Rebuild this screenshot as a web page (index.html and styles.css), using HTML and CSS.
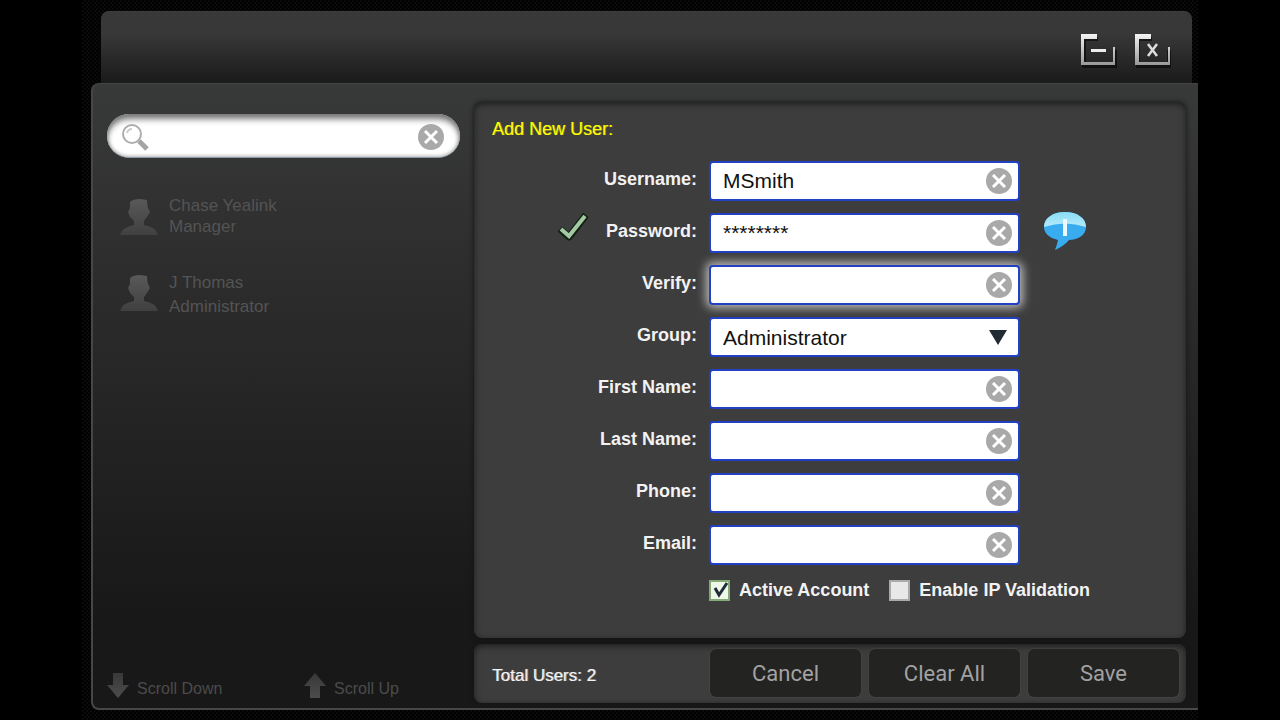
FILE: index.html
```html
<!DOCTYPE html>
<html lang="en">
<head>
<meta charset="utf-8">
<title>User Management</title>
<link rel="stylesheet" href="styles.css">
</head>
<body>
<svg class="defs" aria-hidden="true">
  <defs>
    <linearGradient id="steel" x1="0" y1="0" x2="0" y2="1"><stop offset="0" stop-color="#f4f4f4"/><stop offset="1" stop-color="#989898"/></linearGradient>
    <linearGradient id="person-fill" x1="0" y1="0" x2="0" y2="1"><stop offset="0" stop-color="#595959"/><stop offset="1" stop-color="#404040"/></linearGradient>
    <linearGradient id="arrow-fill" x1="0" y1="0" x2="0" y2="1"><stop offset="0" stop-color="#383838"/><stop offset="1" stop-color="#4c4c4c"/></linearGradient>
    <linearGradient id="bubble-top" x1="0" y1="0" x2="0" y2="1"><stop offset="0" stop-color="#8adcf4"/><stop offset="1" stop-color="#b4ebfa"/></linearGradient>
  </defs>
  <symbol id="clear" viewBox="0 0 26 26">
    <circle cx="13" cy="13" r="13" fill="#a9a9a9"/>
    <path d="M7 7l12 12M19 7L7 19" stroke="#fff" stroke-width="3" fill="none"/>
  </symbol>
  <symbol id="person" viewBox="0 0 38 36">
    <path d="M10 3Q13 0 20 0L27 1Q27 5 28 9L30 13L27 18L24 22V26Q36 28 38 36H0Q2 28 14 26V22L10 18L8 13L10 9Z" fill="url(#person-fill)"/>
  </symbol>
</svg>
<div class="stage">
  <header class="titlebar">
    <button class="window-button" type="button" aria-label="Minimize">
      <svg width="38" height="34" viewBox="0 0 38 34"><path d="M17 3H3V30H34V14" fill="none" stroke="#050505" stroke-width="4" transform="translate(1 2)" opacity=".6"/><path d="M1 0H17V5H4V28H33V13H35V31H1Z" fill="url(#steel)"/><path d="M11 15H26V18H11Z" fill="#eee"/></svg>
    </button>
    <button class="window-button" type="button" aria-label="Close">
      <svg width="38" height="34" viewBox="0 0 38 34"><path d="M17 3H3V30H34V14" fill="none" stroke="#050505" stroke-width="4" transform="translate(1 2)" opacity=".6"/><path d="M1 0H17V5H5V28H34V13H36V31H1Z" fill="url(#steel)"/><path d="M14 10L23 22M23 10L14 22" fill="none" stroke="#ddd" stroke-width="2.5"/></svg>
    </button>
  </header>
  <main class="window">
    <aside class="sidebar">
      <div class="search">
        <svg class="search-icon" width="28" height="28" viewBox="0 0 28 28"><circle cx="11" cy="11" r="9" fill="none" stroke="#adadad" stroke-width="2"/><path d="M6 10Q7 6 11 6" fill="none" stroke="#ccc" stroke-width="2"/><path d="M18 18L26 26" stroke="#a4a4a4" stroke-width="5"/></svg>
        <input class="text" type="text" aria-label="Search users">
        <button class="clear" type="button" aria-label="Clear search"><svg><use href="#clear"/></svg></button>
      </div>
      <ul class="users">
        <li class="user">
          <svg class="person"><use href="#person"/></svg>
          <div><div>Chase Yealink</div><div>Manager</div></div>
        </li>
        <li class="user spaced">
          <svg class="person"><use href="#person"/></svg>
          <div><div>J Thomas</div><div>Administrator</div></div>
        </li>
      </ul>
      <div class="scrollers">
        <button class="scroller" type="button"><svg width="22" height="26" viewBox="0 0 22 26"><path d="M6 0H16V12H22L11 25L0 12H6Z" fill="url(#arrow-fill)"/></svg><span>Scroll Down</span></button>
        <button class="scroller" type="button"><svg width="22" height="26" viewBox="0 0 22 26"><path d="M11 0L22 13H16V25H6V13H0Z" fill="url(#arrow-fill)"/></svg><span>Scroll Up</span></button>
      </div>
    </aside>
    <section class="content">
      <form class="card form">
        <h1 class="title">Add New User:</h1>
        <div class="rows">
          <div class="row"><label for="username">Username:</label>
            <div class="field"><input class="text" id="username" type="text" value="MSmith"><button class="clear" type="button" aria-label="Clear username"><svg><use href="#clear"/></svg></button></div></div>
          <div class="row">
            <div class="checked-label"><svg width="34" height="32" viewBox="0 0 34 32"><path d="M4 18L13 26L30 4" fill="none" stroke="#102012" stroke-width="7" stroke-linejoin="round"/><path d="M5 18L13 25L29 5" fill="none" stroke="#a4c9a3" stroke-width="4"/></svg><label for="password">Password:</label></div>
            <div class="field"><input class="text" id="password" type="text" value="********"><button class="clear" type="button" aria-label="Clear password"><svg><use href="#clear"/></svg></button></div>
            <button class="info" type="button" aria-label="Password information"><svg width="42" height="38" viewBox="0 0 42 38"><path d="M21 0C33 0 42 6 42 15C42 23 34 28 25 28Q20 34 11 38Q13 33 14 28C5 26 0 21 0 15C0 6 9 0 21 0Z" fill="#39acef"/><path d="M21 0C33 0 42 6 42 15Q21 8 0 15C0 6 9 0 21 0Z" fill="url(#bubble-top)"/><path d="M19 7H23V24H19Z" fill="#eafaff"/></svg></button></div>
          <div class="row"><label for="verify">Verify:</label>
            <div class="field active"><input class="text" id="verify" type="text"><button class="clear" type="button" aria-label="Clear verify"><svg><use href="#clear"/></svg></button></div></div>
          <div class="row"><label for="group">Group:</label>
            <div class="field"><select class="text" id="group"><option>Administrator</option><option>Manager</option></select><svg class="arrow" viewBox="0 0 18 15"><path d="M0 0H18L9 15Z" fill="#222b33"/></svg></div></div>
          <div class="row"><label for="first">First Name:</label>
            <div class="field"><input class="text" id="first" type="text"><button class="clear" type="button" aria-label="Clear first name"><svg><use href="#clear"/></svg></button></div></div>
          <div class="row"><label for="last">Last Name:</label>
            <div class="field"><input class="text" id="last" type="text"><button class="clear" type="button" aria-label="Clear last name"><svg><use href="#clear"/></svg></button></div></div>
          <div class="row"><label for="phone">Phone:</label>
            <div class="field"><input class="text" id="phone" type="text"><button class="clear" type="button" aria-label="Clear phone"><svg><use href="#clear"/></svg></button></div></div>
          <div class="row"><label for="email">Email:</label>
            <div class="field"><input class="text" id="email" type="text"><button class="clear" type="button" aria-label="Clear email"><svg><use href="#clear"/></svg></button></div></div>
        </div>
        <div class="options">
          <div class="option"><span class="tick"><input id="active" type="checkbox" checked><svg class="tick-mark" viewBox="0 0 21 21"><path d="M6 8L10 15L18 3" fill="none" stroke="#202d3b" stroke-width="3"/></svg></span><label for="active">Active Account</label></div>
          <div class="option"><span class="tick"><input id="ip" type="checkbox"></span><label for="ip">Enable IP Validation</label></div>
        </div>
      </form>
      <footer class="card actions">
        <p class="total">Total Users: 2</p>
        <button class="action" type="button">Cancel</button>
        <button class="action" type="button">Clear All</button>
        <button class="action" type="button">Save</button>
      </footer>
    </section>
  </main>
</div>
</body>
</html>
```
FILE: styles.css
```css
* { box-sizing: border-box; }
body {
  margin: 0;
  background: #000;
  color: #f2f2f2;
  font-family: "Liberation Sans", Arial, sans-serif;
  font-size: 18px;
}
button, input, select { font: inherit; color: inherit; }
button { border: 0; padding: 0; background: none; cursor: pointer; }
svg { display: block; flex: none; }
.defs { position: absolute; width: 0; height: 0; }
.stage {
  display: flex;
  flex-direction: column;
  min-height: 100vh;
  margin: 0 82px;
  padding: 11px 0 10px 9px;
  background: repeating-conic-gradient(#0a0a0a 0 25%, #000 0 50%) 0 0 / 4px 4px;
}
.titlebar {
  display: flex;
  justify-content: flex-end;
  gap: 16px;
  height: 72px;
  margin: 0 6px 0 10px;
  padding: 22px 20px 0 0;
  border-top: 1px solid #3e3e3e;
  border-radius: 8px 8px 0 0;
  background: linear-gradient(#383838 30%, #1a1a1a);
}
.window-button { width: 38px; height: 34px; }
.window {
  display: flex;
  flex: 1;
  border: 2px solid #474747;
  border-right: 0;
  border-top: 1px solid #444;
  border-radius: 8px 0 0 8px;
  background: linear-gradient(#383a39, #303030 22%, #181818 85%);
}
.sidebar {
  display: flex;
  flex-direction: column;
  flex: 0 1 381px;
  padding: 30px 14px 9px 14px;
  color: #545454;
  font-size: 17px;
}
.search {
  display: flex;
  align-items: center;
  height: 44px;
  padding: 2px 16px 0 14px;
  border-radius: 22px;
  background: #fff;
  border-bottom: 1px solid #8c9baa;
  box-shadow: inset 0 6px 6px -1px #777, inset 0 0 4px #888;
}
.search .text { color: #222; }
.users { margin: 37px 0 0; padding: 0 0 0 13px; list-style: none; }
.user { display: flex; gap: 11px; height: 76px; line-height: 21px; }
.user.spaced { line-height: 24px; }
.person { width: 38px; height: 36px; margin-top: 4px; }
.scrollers {
  display: grid;
  grid-template-columns: 197px 1fr;
  margin-top: auto;
  font-size: 16px;
}
.scroller { display: flex; align-items: center; gap: 8px; color: #4b4b4b; }
.scroller span { padding-top: 6px; }
.content { display: flex; flex-direction: column; flex: 1; gap: 6px; padding: 18px 12px 5px 0; }
.card {
  border-radius: 8px;
  background: #3d3d3d;
  box-shadow: inset 0 2px 6px #1c1c1c, 0 0 5px #151515;
}
.form { flex: 1; padding: 16px 18px 16px; }
.title {
  margin: 0;
  color: #ff0;
  font-size: 18px;
  line-height: 22px;
  font-weight: 400;
  text-shadow: 1px 0 #ffff0066;
}
label { font-weight: 700; }
.rows { display: grid; gap: 12px; margin-top: 21px; }
.row {
  display: grid;
  grid-template-columns: 205px minmax(0, 311px) auto;
  grid-template-rows: 40px;
  justify-content: start;
  align-items: center;
  column-gap: 12px;
}
.row > label { justify-self: end; }
.row label { padding-bottom: 3px; }
.checked-label { display: flex; justify-content: flex-end; align-items: center; gap: 16px; }
.checked-label svg { margin-bottom: 12px; }
.row .info { margin: 0 0 4px 12px; }
.field {
  display: flex;
  align-items: center;
  position: relative;
  height: 40px;
  padding: 0 6px 0 12px;
  border: 2px solid #2140c4;
  border-radius: 4px;
  background: #fff;
  color: #111;
  font-size: 21px;
}
.field.active { box-shadow: 0 0 10px 3px #bbb; }
.text {
  flex: 1;
  min-width: 0;
  height: 100%;
  padding: 0;
  border: 0;
  outline: 0;
  background: transparent;
  appearance: none;
}
.clear, .clear svg { width: 26px; height: 26px; }
.clear { flex: none; }
.arrow {
  position: absolute;
  right: 11px;
  width: 18px;
  height: 15px;
  pointer-events: none;
}
.options { display: flex; gap: 20px; padding: 15px 0 0 217px; }
.option { display: flex; align-items: center; gap: 9px; white-space: nowrap; }
.tick { position: relative; height: 21px; }
.tick input {
  display: block;
  width: 21px;
  height: 21px;
  margin: 0;
  appearance: none;
  border: 2px solid #aaa;
  background: #e8e8e8;
}
.tick input:checked { border-color: #86a978; background: #eef7e8; }
.tick-mark { position: absolute; inset: 0; pointer-events: none; }
.actions { display: flex; align-items: center; gap: 8px; padding: 5px 7px 6px 18px; }
.total { flex: 1; margin: 0; padding-top: 6px; font-size: 17px; text-shadow: 1px 0 #ffffff88; }
.action {
  flex: 0 1 151px;
  height: 48px;
  border-radius: 6px;
  background: #232321;
  color: #a2a2a2;
  font-family: Roboto, sans-serif;
  font-size: 22px;
  box-shadow: 0 0 2px #555;
}
```
